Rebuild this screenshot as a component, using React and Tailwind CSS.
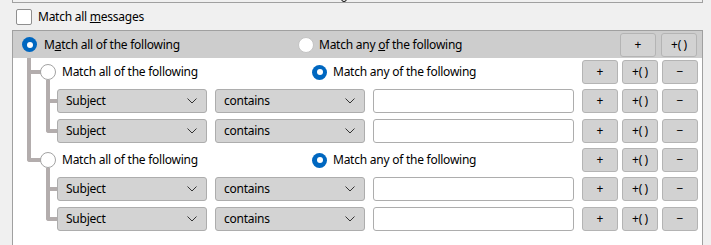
import React from 'react';

const line = 'absolute border-[#b3adad]';

const Radio = ({ checked, light }) =>
  checked ? (
    <span className="relative z-10 flex w-[15px] h-[15px] shrink-0 items-center justify-center rounded-full bg-[#0067c0]">
      <span className="w-[6px] h-[6px] rounded-full bg-white" />
    </span>
  ) : (
    <span
      className={`relative z-10 w-[16px] h-[16px] shrink-0 rounded-full bg-white border ${
        light ? 'border-[#c4c4c4]' : 'border-[#a3a3a3]'
      }`}
    />
  );

const Btn = ({ children }) => (
  <button className="w-[36px] h-[24px] flex items-center justify-center rounded-[3px] border border-[#b4b4b4] bg-[#d2d2d2] text-[12px] leading-none tracking-normal">
    {children}
  </button>
);

const Chevron = () => (
  <svg width="10" height="6" viewBox="0 0 10 6" className="shrink-0">
    <path d="M0.5 0.5 L5 5 L9.5 0.5" fill="none" stroke="#333" strokeWidth="1" />
  </svg>
);

const Select = ({ value }) => (
  <div className="w-[150px] h-[24px] flex items-center justify-between pl-[8px] pr-[9px] rounded-[3px] border border-[#adadad] bg-[#d3d3d3]">
    <span>{value}</span>
    <Chevron />
  </div>
);

const Group = ({ anyChecked }) => (
  <div className="relative flex flex-col gap-[6px]">
    {/* inner tree line */}
    <div className={`${line} left-[33px] top-[19px] w-[11px] h-[53px] border-l-4 border-b-4 rounded-bl-[3px]`} />
    <div className={`${line} left-[33px] top-[38px] w-[11px] h-[4px] border-t-4`} />

    <div className="h-[22px] flex items-center pl-[27px] pr-[4px]">
      <div className="w-[272px] flex items-center gap-[6px]">
        <Radio checked={!anyChecked} />
        <span>Match all of the following</span>
      </div>
      <div className="flex items-center gap-[6px]">
        <Radio checked={anyChecked} />
        <span>Match any of the following</span>
      </div>
      <div className="ml-auto flex gap-[4px]">
        <Btn>+</Btn>
        <Btn>+(&thinsp;)</Btn>
        <Btn>−</Btn>
      </div>
    </div>

    {[0, 1].map((i) => (
      <div key={i} className="h-[24px] flex items-center pl-[44px] pr-[4px]">
        <Select value="Subject" />
        <div className="ml-[8px]">
          <Select value="contains" />
        </div>
        <input className="ml-[8px] w-[201px] h-[24px] rounded-[3px] border border-[#adadad] bg-white outline-none" />
        <div className="ml-auto flex gap-[4px]">
          <Btn>+</Btn>
          <Btn>+(&thinsp;)</Btn>
          <Btn>−</Btn>
        </div>
      </div>
    ))}
  </div>
);

export default function App() {
  return (
    <div className="w-[711px] h-[245px] overflow-hidden bg-[#f0f0f0] text-[12px] tracking-[-0.25px] text-black font-['Noto_Sans',sans-serif] flex flex-col">
      <div className="relative ml-[12px] w-[691px] h-[3px] shrink-0 border-x border-b border-[#a0a0a0]">
        <span className="absolute left-[328px] top-[-4px] w-[6px] h-[6px] rounded-full border border-black bg-white" />
      </div>

      <div className="h-[27px] shrink-0 flex items-center ml-[16px] gap-[6px]">
        <span className="w-[16px] h-[16px] rounded-[2px] border border-[#8f8f8f] bg-white" />
        <span>
          Match all <u>m</u>essages
        </span>
      </div>

      <div className="ml-[12px] w-[691px] flex-1 flex flex-col border-x border-t border-[#a0a0a0] bg-white">
        <div className="h-[27px] shrink-0 flex items-center pl-[9px] pr-[5px] bg-[#cdcdcd]">
          <div className="w-[276px] flex items-center gap-[7px]">
            <Radio checked />
            <span>
              M<u>a</u>tch all of the following
            </span>
          </div>
          <div className="flex items-center gap-[5px]">
            <Radio light />
            <span>
              Match any <u>o</u>f the following
            </span>
          </div>
          <div className="ml-auto flex gap-[5px]">
            <Btn>+</Btn>
            <Btn>+(&thinsp;)</Btn>
          </div>
        </div>

        <div className="relative flex flex-col gap-[6px] pt-[3px]">
          {/* outer tree line */}
          <div className={`${line} left-[14px] top-0 w-[14px] h-[104px] border-l-4 border-b-4 rounded-bl-[3px]`} />
          <div className={`${line} left-[14px] top-[12px] w-[14px] h-[4px] border-t-4`} />
          <Group anyChecked />
          <Group anyChecked />
        </div>
      </div>
    </div>
  );
}
